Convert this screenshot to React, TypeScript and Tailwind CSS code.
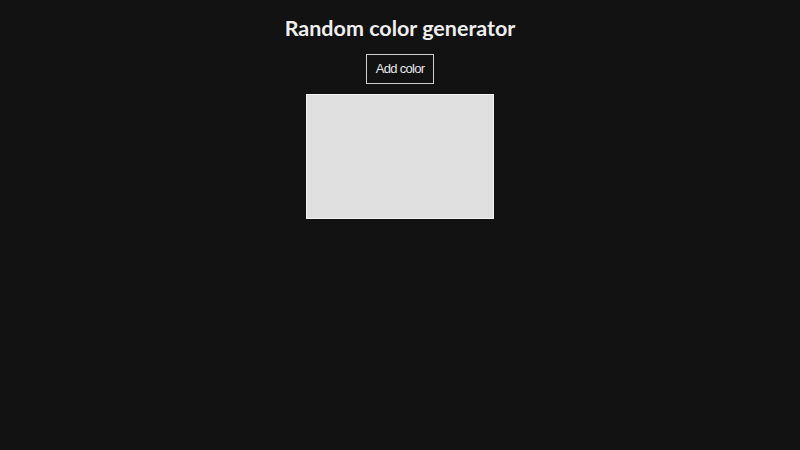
import { useState } from "react";

export default function App() {
  const [colors, setColors] = useState<string[]>(["#e0e0e0"]);

  const addColor = () => {
    const hex = Math.floor(Math.random() * 0xffffff)
      .toString(16)
      .padStart(6, "0");
    setColors((prev) => [...prev, `#${hex}`]);
  };

  return (
    <main className="min-h-screen bg-[#121212] pt-[12px] text-[#eeeeee]">
      <div className="flex flex-col items-center">
        <h1 className="font-['Lato',sans-serif] text-[21.5px] font-bold leading-[32px]">
          Random color generator
        </h1>
        <button
          onClick={addColor}
          className="mt-[10px] h-[30px] w-[68px] border border-[#cfcfcf] bg-transparent font-['Liberation_Sans',Arial,sans-serif] text-[13px] tracking-[-0.7px] text-[#e6e6e6]"
        >
          Add color
        </button>
        <div className="mt-[10px] flex flex-wrap justify-center gap-2">
          {colors.map((c, i) => (
            <div
              key={i}
              className="h-[125px] w-[188px] border border-[#f2f2f2]"
              style={{ backgroundColor: c }}
            />
          ))}
        </div>
      </div>
    </main>
  );
}
